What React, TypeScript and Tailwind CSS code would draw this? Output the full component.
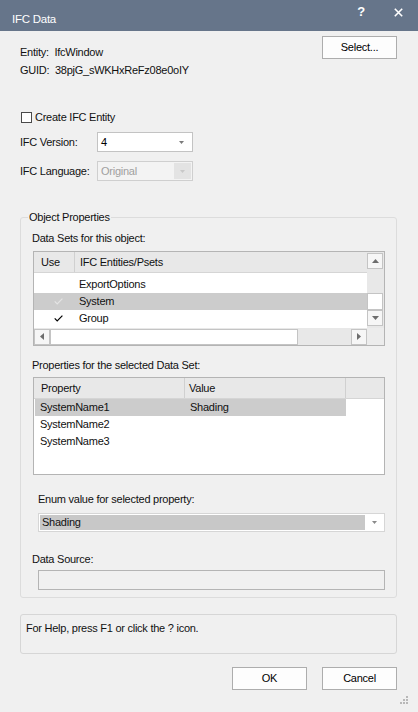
import React from 'react';

type Dir = 'up' | 'down' | 'left' | 'right';

// little solid arrow used by the scroll bars and combo boxes
function Tri({ dir, color = '#606060', size = 7 }: { dir: Dir; color?: string; size?: number }) {
  const h = Math.round(size / 2 + 0.5);
  const pts: Record<Dir, string> = {
    up: `0,${h} ${size / 2},0 ${size},${h}`,
    down: `0,0 ${size},0 ${size / 2},${h}`,
    left: `${h},0 ${h},${size} 0,${size / 2}`,
    right: `0,0 ${h},${size / 2} 0,${size}`,
  };
  const vertical = dir === 'up' || dir === 'down';
  return (
    <svg width={vertical ? size : h} height={vertical ? h : size} className="block">
      <polygon points={pts[dir]} fill={color} />
    </svg>
  );
}

function Check({ color }: { color: string }) {
  return (
    <svg width="9" height="7" viewBox="0 0 9 7" className="block">
      <path d="M0.7 3.4 L3.2 5.9 L8.4 0.6" fill="none" stroke={color} strokeWidth="1.2" />
    </svg>
  );
}

function ScrollBtn({ dir }: { dir: Dir }) {
  return (
    <div className="flex h-[16px] w-[16px] items-center justify-center border border-[#c4c4c4] bg-[#f6f6f6]">
      <Tri dir={dir} size={7} color="#6d6d6d" />
    </div>
  );
}

function Combo({ value, disabled }: { value: string; disabled?: boolean }) {
  return (
    <div
      className={`flex h-[20px] w-[96px] items-center border ${
        disabled ? 'border-[#cfcfcf] bg-[#f3f3f3] text-[#a0a0a0]' : 'border-[#c3c3c3] bg-white text-black'
      }`}
    >
      <span className="flex-1 pl-[3px]">{value}</span>
      {disabled ? (
        <div className="mr-[1px] flex h-[16px] w-[17px] items-center justify-center bg-[#e3e3e3]">
          <Tri dir="down" size={5} color="#c8c8c8" />
        </div>
      ) : (
        <div className="mr-[6px] flex w-[10px] items-center justify-center">
          <Tri dir="down" size={5} color="#7a7a7a" />
        </div>
      )}
    </div>
  );
}

function DialogButton({ label }: { label: string }) {
  return (
    <button className="flex h-[23px] w-[75px] items-center justify-center border border-[#adadad] bg-[#fdfdfd] text-black">
      {label}
    </button>
  );
}

const dataSets = [
  { name: 'ExportOptions', use: false, selected: false },
  { name: 'System', use: true, selected: true },
  { name: 'Group', use: true, selected: false },
];

const props = ['SystemName1', 'SystemName2', 'SystemName3'];

function DataSetList() {
  return (
    <div className="ml-[12px] mr-[11px] mt-[5px] h-[95px] border border-[#b4b4b4] bg-white">
      <div className="flex h-[76px]">
        <div className="flex flex-1 flex-col">
          {/* header */}
          <div className="flex h-[21px] items-center border-b border-[#d5d5d5] bg-[#e8e8e8]">
            <div className="flex h-full w-[41px] items-center border-r border-[#d0d0d0] pl-[7px]">Use</div>
            <div className="pl-[5px]">IFC Entities/Psets</div>
          </div>
          <div className="pt-[3px]">
            {dataSets.map((d) => (
              <div key={d.name} className={`flex h-[17px] items-center ${d.selected ? 'bg-[#cccccc]' : ''}`}>
                <div className="flex w-[41px] items-center pl-[20px]">
                  {d.use && <Check color={d.selected ? '#e4e4e4' : '#000000'} />}
                </div>
                <span className="pl-[4px]">{d.name}</span>
              </div>
            ))}
          </div>
        </div>
        {/* vertical scroll bar */}
        <div className="flex w-[17px] flex-col bg-[#e8e8e8] pt-[1px]">
          <ScrollBtn dir="up" />
          <div className="h-[24px]" />
          <div className="h-[17px] w-[16px] border border-[#c4c4c4] bg-white" />
          <ScrollBtn dir="down" />
        </div>
      </div>
      {/* horizontal scroll bar */}
      <div className="flex h-[17px]">
        <div className="flex flex-1 items-center bg-[#e8e8e8]">
          <ScrollBtn dir="left" />
          <div className="h-[16px] w-[248px] border border-[#c4c4c4] bg-white" />
          <div className="flex-1" />
          <ScrollBtn dir="right" />
        </div>
        <div className="w-[17px] bg-[#ececec]" />
      </div>
    </div>
  );
}

function PropertyList() {
  return (
    <div className="ml-[12px] mr-[11px] mt-[4px] h-[98px] border border-[#b4b4b4] bg-white">
      <div className="flex h-[21px] items-center border-b border-[#d5d5d5] bg-[#e8e8e8]">
        <div className="flex h-full w-[151px] items-center border-r border-[#d0d0d0] pl-[7px]">Property</div>
        <div className="flex h-full w-[161px] items-center border-r border-[#d0d0d0] pl-[4px]">Value</div>
      </div>
      {props.map((p, i) => (
        <div key={p} className="flex h-[17px] items-center">
          <div className={`ml-[1px] flex h-full w-[311px] items-center ${i === 0 ? 'bg-[#cccccc]' : ''}`}>
            <span className="w-[151px] pl-[5px]">{p}</span>
            <span className="pl-[4px]">{i === 0 ? 'Shading' : ''}</span>
          </div>
        </div>
      ))}
    </div>
  );
}

export default function App() {
  return (
    <div className="flex h-[712px] w-[418px] flex-col overflow-hidden bg-[#f0f0f0] font-['Liberation_Sans',Arial,sans-serif] text-[11px] tracking-[-0.25px] text-[#111111]">
      {/* title bar */}
      <div className="flex h-[31px] shrink-0 items-start bg-[#66758a] text-white">
        <span className="pl-[12px] pt-[12px] text-[11.5px] leading-[14px]">IFC Data</span>
        <div className="flex-1" />
        <span className="pt-[4px] text-[13px] font-bold leading-[16px]">?</span>
        <svg width="9" height="9" viewBox="0 0 9 9" className="ml-[29px] mr-[15px] mt-[8px]">
          <path d="M0.8 0.8 L8.2 8.2 M8.2 0.8 L0.8 8.2" stroke="#ffffff" strokeWidth="1.6" />
        </svg>
      </div>

      <div className="flex flex-1 flex-col pl-[20px] pr-[21px]">
        {/* entity info */}
        <div className="mt-[5px] flex items-start justify-between">
          <div className="pt-[7px] leading-[18px]">
            <div>Entity:&nbsp; IfcWindow</div>
            <div>GUID:&nbsp; 38pjG_sWKHxReFz08e0oIY</div>
          </div>
          <DialogButton label="Select..." />
        </div>

        <div className="mt-[30px] flex h-[16px] items-center">
          <div className="ml-[1px] h-[11px] w-[11px] border border-[#4a4a4a] bg-white" />
          <span className="pl-[3px]">Create IFC Entity</span>
        </div>

        <div className="mt-[7px] flex items-center">
          <span className="w-[77px]">IFC Version:</span>
          <Combo value="4" />
        </div>
        <div className="mt-[9px] flex items-center">
          <span className="w-[77px]">IFC Language:</span>
          <Combo value="Original" disabled />
        </div>

        {/* object properties group */}
        <div className="mt-[36px] flex h-[381px] flex-col rounded-[3px] border border-[#dcdcdc]">
          <span className="-mt-[8px] ml-[7px] w-fit bg-[#f0f0f0] px-[1px] leading-[15px]">Object Properties</span>
          <div className="mt-[5px] pl-[11px] leading-[16px]">Data Sets for this object:</div>
          <DataSetList />
          <div className="mt-[11px] pl-[11px] leading-[16px]">Properties for the selected Data Set:</div>
          <PropertyList />
          <div className="mt-[16px] pl-[17px] leading-[16px]">Enum value for selected property:</div>
          <div className="ml-[17px] mr-[11px] mt-[6px] flex h-[19px] items-center border border-[#d6d6d6] bg-white p-[1px]">
            <div className="flex h-full flex-1 items-center bg-[#c8c8c8] pl-[2px]">Shading</div>
            <div className="flex w-[18px] items-center justify-center">
              <Tri dir="down" size={5} color="#8a8a8a" />
            </div>
          </div>
          <div className="mt-[19px] pl-[11px] leading-[16px]">Data Source:</div>
          <div className="ml-[17px] mr-[11px] mt-[3px] h-[20px] border border-[#b4b4b4] bg-[#f0f0f0]" />
        </div>

        {/* help text */}
        <div className="mt-[16px] h-[40px] rounded-[3px] border border-[#d6d6d6] pl-[5px] pt-[5px] leading-[16px]">
          For Help, press F1 or click the ? icon.
        </div>

        <div className="mt-[13px] flex justify-end gap-[15px]">
          <DialogButton label="OK" />
          <DialogButton label="Cancel" />
        </div>

        {/* size grip */}
        <div className="-mr-[12px] mt-[6px] flex justify-end">
          <svg width="9" height="9" viewBox="0 0 9 9">
            <g fill="#b8b8b8">
              <rect x="6" y="0" width="2" height="2" />
              <rect x="3" y="3" width="2" height="2" />
              <rect x="6" y="3" width="2" height="2" />
              <rect x="0" y="6" width="2" height="2" />
              <rect x="3" y="6" width="2" height="2" />
              <rect x="6" y="6" width="2" height="2" />
            </g>
          </svg>
        </div>
      </div>
    </div>
  );
}
